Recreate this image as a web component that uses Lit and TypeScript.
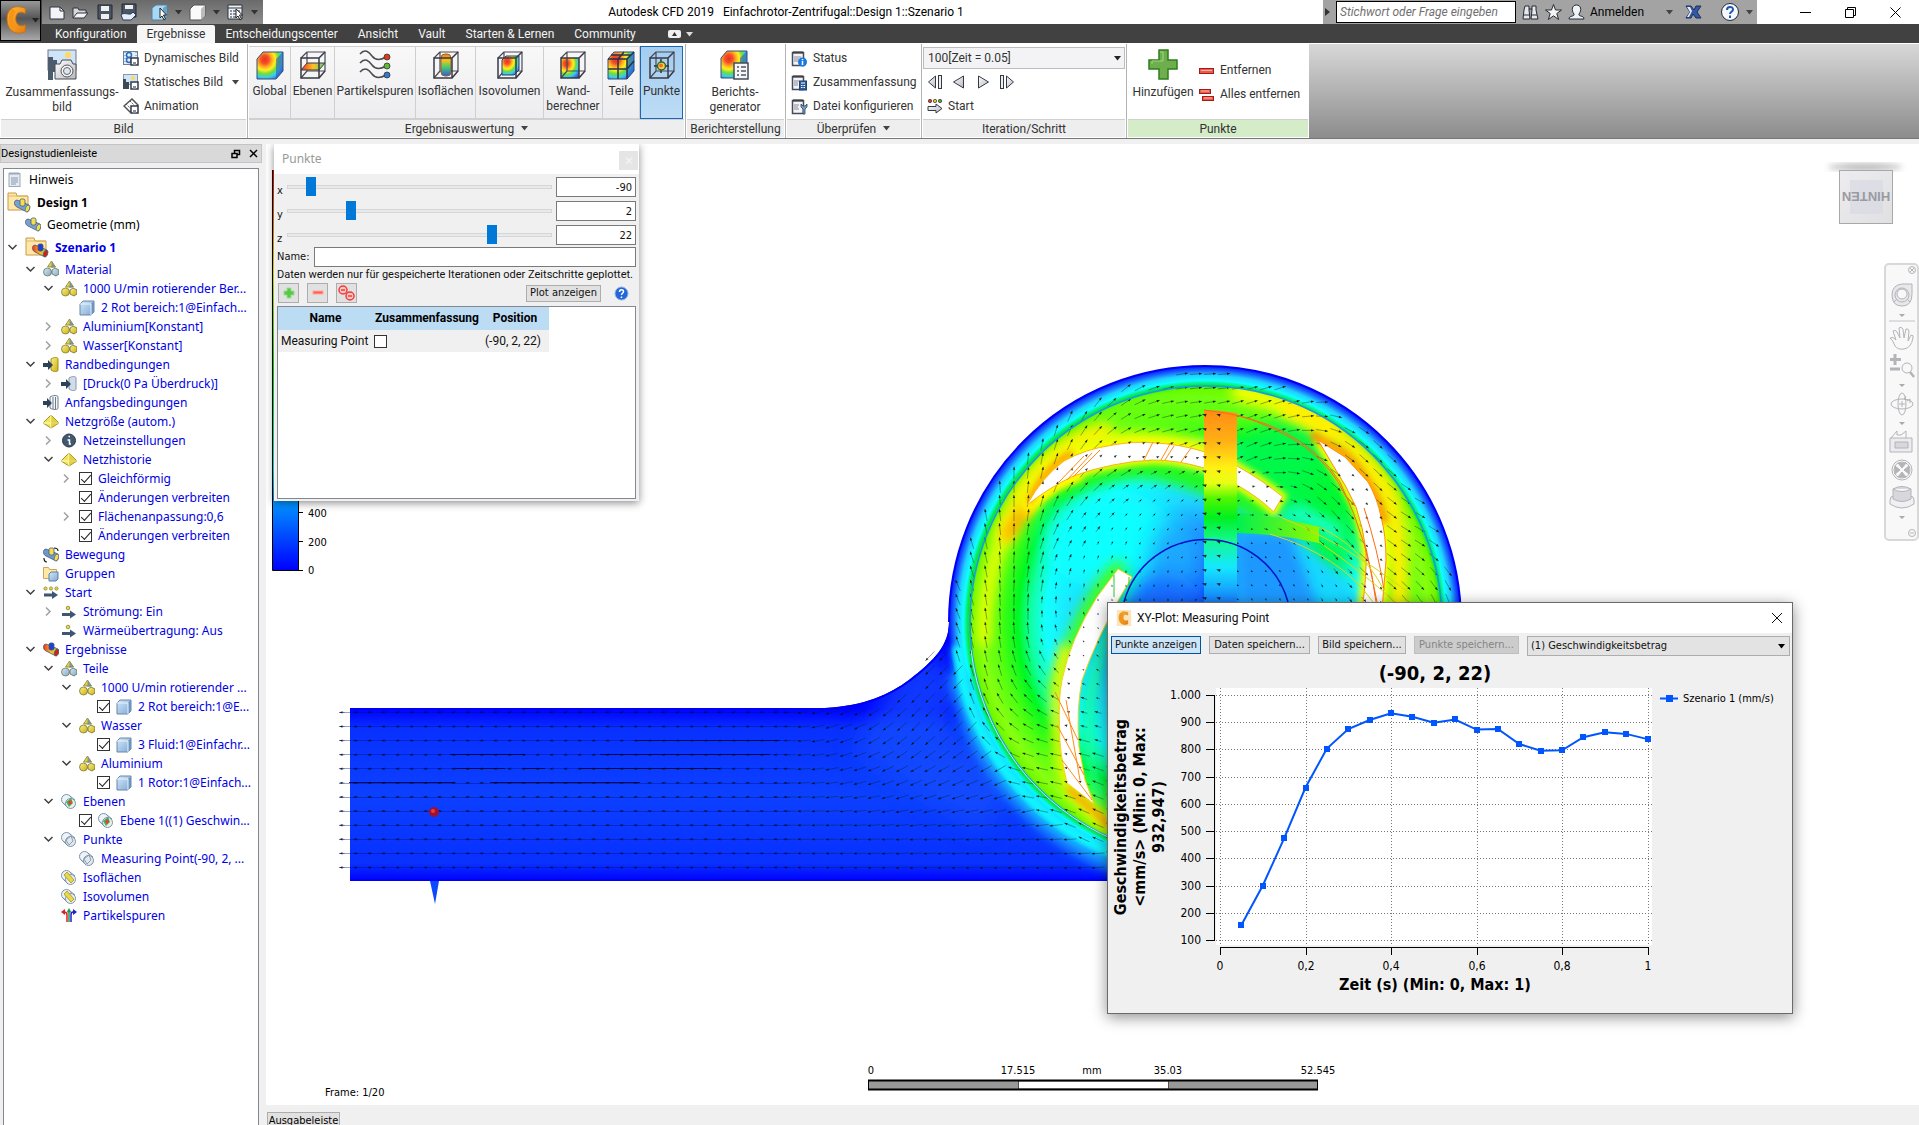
import { LitElement, html, svg, css, nothing } from "lit";
import { customElement } from "lit/decorators.js";

const base = css`
  * { box-sizing: border-box; }
  button, input, select { font: inherit; color: inherit; margin: 0; padding: 0; border-radius: 0; }
  button { cursor: default; }
  svg { display: block; flex: none; }
  .defs { position: absolute; width: 0; height: 0; }
`;

/* ---------- shared gradients ---------- */
const defs = html`<svg class="defs" aria-hidden="true"><defs>
  <radialGradient id="heat" cx="0.3" cy="0.28" r="0.95">
    <stop offset="0" stop-color="#f0301c"/><stop offset="0.16" stop-color="#f2502a"/>
    <stop offset="0.3" stop-color="#ffb020"/><stop offset="0.42" stop-color="#ffee20"/>
    <stop offset="0.56" stop-color="#70dc3c"/><stop offset="0.7" stop-color="#38d0e8"/>
    <stop offset="0.86" stop-color="#2f78e8"/><stop offset="1" stop-color="#2848c8"/>
  </radialGradient>
  <linearGradient id="heatV" x1="0" y1="0" x2="0" y2="1">
    <stop offset="0" stop-color="#f08020"/><stop offset="0.3" stop-color="#f4c020"/>
    <stop offset="0.55" stop-color="#58d060"/><stop offset="1" stop-color="#2860e0"/>
  </linearGradient>
  <linearGradient id="heatH" x1="0" y1="0" x2="1" y2="0">
    <stop offset="0" stop-color="#f03020"/><stop offset="0.5" stop-color="#ffc020"/>
    <stop offset="1" stop-color="#50d080"/>
  </linearGradient>
  <linearGradient id="gold" x1="0" y1="0" x2="1" y2="1">
    <stop offset="0" stop-color="#fff08a"/><stop offset="1" stop-color="#c8b010"/>
  </linearGradient>
  <linearGradient id="sky" x1="0" y1="0" x2="1" y2="1">
    <stop offset="0" stop-color="#d4e8fa"/><stop offset="1" stop-color="#7ea8d4"/>
  </linearGradient>
  <linearGradient id="orange" x1="0" y1="0" x2="1" y2="1">
    <stop offset="0" stop-color="#ffb838"/><stop offset="1" stop-color="#e87c10"/>
  </linearGradient>
  <linearGradient id="metal" x1="0" y1="0" x2="1" y2="1">
    <stop offset="0" stop-color="#ffffff"/><stop offset="1" stop-color="#b8b8c0"/>
  </linearGradient>
</defs></svg>`;

const icon = (w: number, h: number, body: unknown) =>
  html`<svg width=${w} height=${h} viewBox="0 0 ${w} ${h}" aria-hidden="true">${body}</svg>`;

const chevronC = svg`<path d="M26 5C14 0 5 5 5 17s8 20 21 15v-8c-7 3-11-1-11-7s4-10 11-6z" fill="url(#orange)" stroke="#c8700c"/>
  <path d="M15 9c-4 4-4 13 1 18l-2 5C5 27 5 12 11 5z" fill="#f59418"/>`;

const tri = (c = "#444") => html`<svg width="7" height="5" viewBox="0 0 7 5" aria-hidden="true"><path d="M0 0h7L3.500 4.500z" fill=${c}/></svg>`;

/* ---------- ribbon icons ---------- */
const wireBack = svg`<path d="M9 2h18v19H9zM9 21l-6 7M9 2L3 8" fill="none" stroke="#4a4a55" stroke-width="1.200"/>`;
const wireFront = svg`<path d="M3 8h18v20H3zM21 8l6-6M21 28l6-7" fill="none" stroke="#3a3a46" stroke-width="1.500"/>`;
const solidCube = svg`<path d="M2 9l6-7h20v19l-7 8H2z" fill="url(#heat)"/><path d="M21 9l7-7v19l-7 8z" fill="#2850c8" opacity=".55"/>
  <path d="M2 9l6-7h20v19l-7 8H2z" fill="none" stroke="#3a4a78"/>`;
const floppy = svg`<path d="M1 1h7v7H1z" fill="#fff" stroke="#333a48" stroke-width="1.500"/><path d="M3 5h3v3H3z" fill="#8890a0"/>`;

const R: Record<string, unknown> = {
  photo: icon(30, 32, svg`<rect x="1" y="1" width="28" height="20" fill="#cfe4f6" stroke="#6a7a88"/><circle cx="21" cy="6" r="3" fill="#ffd860"/>
    <path d="M1 8h5v23H1zM6 11h4v12H6z" fill="#4c5c6c"/><path d="M8 15h5l2-4h9l2 4h3v15H8z" fill="url(#metal)" stroke="#444c54"/><circle cx="20" cy="22" r="6" fill="#f4f4f4" stroke="#555"/><circle cx="20" cy="22" r="3.500" fill="#dfe7ee" stroke="#667"/>`),
  dyn: icon(16, 16, svg`<rect x=".5" y="1.500" width="14" height="13" fill="#e2eefa" stroke="#68829c"/><path d="M2 2v12M13 2v12" stroke="#68829c" stroke-dasharray="1 2"/><circle cx="6" cy="5" r="2.500" fill="none" stroke="#2a6cc0" stroke-width="1.500"/><circle cx="6" cy="10" r="2.500" fill="none" stroke="#2a6cc0" stroke-width="1.500"/><g transform="translate(7 7)">${floppy}</g>`),
  stat: icon(16, 16, svg`<rect x=".5" y=".5" width="14" height="10" fill="#cfe4f6" stroke="#8a98a4"/><circle cx="10" cy="4" r="2" fill="#ffd860"/><path d="M0 5h3v10H0zM3 8h3v7H3z" fill="#3c4854"/><g transform="translate(7 7)">${floppy}</g>`),
  anim: icon(16, 16, svg`<path d="M1 8l8-7 6 6-8 7z" fill="#fff" stroke="#555" stroke-width="1.500"/><path d="M1 8l6 6M3 6l7 7M7 3l4 4" stroke="#555" stroke-dasharray="1.500 1"/><g transform="translate(7 7)">${floppy}</g>`),
  global: icon(30, 30, solidCube),
  planes: icon(30, 30, svg`${wireBack}<path d="M3 20l6-7h18l-6 7z" fill="url(#heatH)" stroke="#3a3a46"/>${wireFront}`),
  traces: icon(32, 30, svg`${[5, 14, 23].map((y, i) => svg`<path d="M1 ${y - 1}c5-6 9-2 12 2s7 5 14 1" fill="none" stroke="#4a4a55" stroke-width="1.500"/><circle cx="28" cy="${y + 2}" r="3" fill="${["#e03818", "#60b838", "#3078d0"][i]}" stroke="#333" stroke-width=".8"/>`)}`),
  isof: icon(30, 30, svg`${wireBack}<rect x="10" y="4" width="10" height="22" rx="4" fill="url(#heatV)" stroke="#a06020"/>${wireFront}`),
  isov: icon(30, 30, svg`${wireBack}<path d="M7 10l4-4h13v14l-5 5H7z" fill="url(#heat)" stroke="#333a78"/>${wireFront}`),
  wall: icon(30, 30, svg`<path d="M3 8h18v20H3z" fill="url(#heat)"/>${wireBack}${wireFront}`),
  parts: icon(30, 30, svg`${solidCube}<path d="M2 19h19M12 9v20M21 9v20M2 9h19l7-7M12 9l6-7M21 19l7-8M5 5h20" fill="none" stroke="#28324a" stroke-width="1.500"/>`),
  points: icon(30, 30, svg`${wireBack}${wireFront}<path d="M14 9v14M7 16h15" stroke="#333" stroke-width="1.500"/><circle cx="14.500" cy="16" r="4" fill="#ffd040" stroke="#2a6a30" stroke-width="1.500"/><circle cx="14" cy="15.500" r="2" fill="#f07020"/>`),
  report: icon(32, 32, svg`<g>${solidCube}</g><rect x="15" y="14" width="14" height="16" fill="#f4f6f8" stroke="#444c58" stroke-width="1.500"/><path d="M18 18h2M22 18h5M18 22h2M22 22h5M18 26h2M22 26h5" stroke="#556" stroke-width="1.500"/>`),
  status: icon(17, 17, svg`<path d="M1.500 2.500h11v13h-11z" fill="#f2f4f6" stroke="#444c58" stroke-width="1.500"/><path d="M3 1v3M5 1v3M7 1v3M9 1v3M11 1v3" stroke="#333"/><path d="M3 7h7M3 9h5M3 11h4" stroke="#889"/><circle cx="11.500" cy="12" r="4.500" fill="#1878e0"/><path d="M11.500 11v4M11.500 9v1.200" stroke="#fff" stroke-width="1.500"/>`),
  summary: icon(17, 17, svg`<path d="M1.500 2.500h11v13h-11z" fill="#f2f4f6" stroke="#444c58" stroke-width="1.500"/><path d="M3 1v3M5 1v3M7 1v3M9 1v3M11 1v3" stroke="#333"/><path d="M3 7h5M3 9h4M3 11h4" stroke="#889"/><rect x="8.500" y="7" width="7" height="9" fill="#2a5ca0" stroke="#20406c"/><path d="M10 9h4" stroke="#fff"/><path d="M10 11.500h4M10 13.500h4" stroke="#fff" stroke-dasharray="1 .5"/>`),
  config: icon(17, 17, svg`<path d="M1.500 2.500h11v13h-11z" fill="#f2f4f6" stroke="#444c58" stroke-width="1.500"/><path d="M3 1v3M5 1v3M7 1v3M9 1v3M11 1v3" stroke="#333"/><path d="M3 7h5M3 9h4M3 11h5" stroke="#889"/><path d="M10 6v3l2 2v5h2v-5l2-2V6l-2 2h-2z" fill="#7a9cc0" stroke="#2c4460" stroke-width=".8"/>`),
  plus: icon(30, 32, svg`<path d="M11 1h9v10h9v9h-9v10h-9V20H1v-9h10z" fill="#6fae4c" stroke="#2f7d1c" stroke-width="1.500"/><path d="M12 3h3v9H4v3" fill="none" stroke="#a4d488"/>`),
  minus: icon(17, 16, svg`<rect x="1.500" y="5.500" width="14" height="5" fill="#f2574c" stroke="#9c2018"/><path d="M3 7.500h11" stroke="#ffb0a8"/>`),
  minus2: icon(17, 16, svg`<rect x="1.500" y="2.500" width="11" height="4" fill="#f2574c" stroke="#9c2018"/><rect x="4.500" y="9.500" width="11" height="4" fill="#f2574c" stroke="#9c2018"/><path d="M3 4h8M6 11h8" stroke="#ffb0a8"/>`),
  first: icon(16, 16, svg`<path d="M8.500 2v12L1.500 8z" fill="url(#metal)" stroke="#333a44"/><rect x="11.500" y="1.500" width="3" height="13" fill="#eee" stroke="#333a44"/>`),
  prev: icon(16, 16, svg`<path d="M12.500 2v12L2.500 8z" fill="url(#metal)" stroke="#333a44"/>`),
  next: icon(16, 16, svg`<path d="M3.500 2v12l10-6z" fill="url(#metal)" stroke="#333a44"/>`),
  last: icon(16, 16, svg`<path d="M7.500 2v12l7-6z" fill="url(#metal)" stroke="#333a44"/><rect x="1.500" y="1.500" width="3" height="13" fill="#eee" stroke="#333a44"/>`),
  run: icon(16, 16, svg`<circle cx="3" cy="3" r="1.700" fill="#d83820" stroke="#333" stroke-width=".7"/><circle cx="8" cy="3" r="1.700" fill="#e8c020" stroke="#333" stroke-width=".7"/><circle cx="13" cy="3" r="1.700" fill="#48a830" stroke="#333" stroke-width=".7"/><path d="M1 8.500h8v-2.500l6 4.500-6 4.500v-2.500H1z" fill="url(#metal)" stroke="#333a44"/>`),
};

const big = (ic: string, lines: string[], cls = "") => html`<button class="big ${cls}">${R[ic]}<span>${lines.map((l, i) => html`${i ? html`<br>` : nothing}${l}`)}</span></button>`;
const small = (ic: string, label: string, drop = false) => html`<button class="small">${R[ic]}<span>${label}</span>${drop ? tri() : nothing}</button>`;

@customElement("cfd-ribbon")
class CfdRibbon extends LitElement {
  static styles = [base, css`
    :host { display: block; font: 12px/15px Roboto, "Noto Sans", sans-serif; color: #333; }
    .top { display: grid; grid-template-columns: 42px 1fr; background: #414141; }
    .app { grid-row: 1 / 3; width: 41px; height: 41px; border: 1px solid #000; background: linear-gradient(#989898, #555 45%, #a8a8a8); display: flex; align-items: center; gap: 1px; padding-left: 3px; align-self: start; }
    .titlebar { display: flex; height: 24px; background: #fff; align-items: stretch; color: #000; }
    .quick { width: 221px; background: linear-gradient(#6a6a6a, #8e8e8e); display: flex; align-items: center; padding: 0 6px; gap: 7px; }
    .quick button, .search button, .win button { border: 0; background: none; display: flex; align-items: center; }
    .sep { width: 1px; height: 22px; background: #a8a8a8; }
    .doc { flex: 1; text-align: center; line-height: 24px; white-space: pre; padding-right: 14px; }
    .search { width: 434px; background: #a3a3a3; display: flex; align-items: center; gap: 6px; padding: 0 4px 0 2px; }
    .search input { width: 180px; height: 22px; border: 1px solid #000; background: #fff; padding: 0 3px; font-style: italic; font-size: 12px; }
    .search input::placeholder { color: #707070; opacity: 1; }
    .search .user { gap: 5px; flex: 1; }
    .search .user svg:last-child { margin-left: auto; margin-right: 6px; }
    .search .x { margin-right: 12px; }
    .win { width: 162px; display: flex; justify-content: flex-end; gap: 34px; padding-right: 18px; }
    .tabs { display: flex; height: 19px; padding-left: 3px; align-items: flex-end; }
    .tab { border: 0; background: none; color: #f4f4f4; height: 18px; line-height: 18px; padding: 0 10px; }
    .tab.on { background: #f6f6f6; color: #333; border-radius: 2px 2px 0 0; }
    .expand { border: 0; background: none; display: flex; align-items: center; gap: 5px; height: 18px; margin-left: 22px; }
    .ribbon { display: flex; height: 96px; background: linear-gradient(#d8d8d8, #8c8c8c); border-top: 1px solid #fff; border-bottom: 1px solid #777; }
    .panel { background: #fff; border-right: 1px solid #b4b4b4; display: flex; flex-direction: column; padding: 0 1px; }
    .body { flex: 1; display: flex; padding-top: 2px; }
    .foot { height: 18px; background: #eee; border-top: 1px solid #d0d0d0; line-height: 16px; display: flex; justify-content: center; align-items: center; gap: 7px; margin-bottom: 1px; }
    .foot.green { background: #d4ecc8; }
    .p1 { width: 248px; } .p2 { width: 438px; } .p3 { width: 100px; } .p4 { width: 136px; } .p5 { width: 205px; } .p6 { width: 182px; border: 0; }
    .big { display: flex; flex-direction: column; align-items: center; gap: 4px; border: 0; background: none; padding-top: 3px; height: 73px; white-space: nowrap; text-align: center; flex: none; line-height: 15px; }
    .strip .big { background: linear-gradient(#f8f8f8, #ededf0); border: 1px solid #cfcfcf; border-left-width: 0; }
    .strip .big.sel { background: linear-gradient(#a4cdf0, #bddcf5); border: 1px solid #1a66b8; }
    .w1 { width: 122px; } .g1 { width: 42px; } .g2 { width: 44px; } .g3 { width: 81px; } .g4 { width: 60px; } .g5 { width: 68px; } .g6 { width: 59px; } .g7 { width: 37px; } .g8 { width: 43px; } .w2 { width: 96px; } .w3 { width: 70px; }
    .col { display: flex; flex-direction: column; }
    .small { display: flex; align-items: center; gap: 5px; height: 24px; border: 0; background: none; white-space: nowrap; }
    .small svg + span + svg { margin-left: 4px; }
    .p4 .body { padding-left: 4px; } .p5 .col { flex: 1; }
    .pick { display: flex; align-items: center; height: 24px; }
    .combo { position: relative; display: flex; flex: 1; }
    .combo select { appearance: none; flex: 1; height: 22px; border: 1px solid #bcbcbc; background: #f3f3f5; padding: 0 4px; }
    .combo svg { position: absolute; right: 4px; top: 9px; pointer-events: none; }
    .steps { display: flex; gap: 8px; height: 24px; align-items: center; padding-left: 4px; }
    .steps button { border: 0; background: none; }
    .go { padding-left: 4px; }
    .rem { justify-content: center; padding-bottom: 0; }
  `];
  render() {
    const tabs = ["Konfiguration", "Ergebnisse", "Entscheidungscenter", "Ansicht", "Vault", "Starten & Lernen", "Community"];
    const q = (label: string, body: unknown, cls = "") => html`<button class=${cls} aria-label=${label}>${icon(17, 18, body)}</button>`;
    return html`${defs}
    <header class="top">
      <button class="app" aria-label="Anwendungsmenü"><svg width="27" height="33" viewBox="2 0 30 38" aria-hidden="true">${chevronC}</svg>${tri("#222")}</button>
      <div class="titlebar">
        <div class="quick">
          ${q("Neu", svg`<path d="M2 4h10l4 4v8H2z" fill="#f4f4f4" stroke="#2c3440"/><path d="M12 4v4h4" fill="none" stroke="#2c3440"/>`)}
          ${q("Öffnen", svg`<path d="M1 15V5h5l1 2h7v3" fill="#d8d8d8" stroke="#2c3440"/><path d="M1 15l4-5h11l-4 5z" fill="#f4f4f4" stroke="#2c3440"/>`)}
          ${q("Speichern", svg`<path d="M2 2h14v14H2z" fill="#4a5664" stroke="#20262e"/><path d="M5 3h8v5H5zM5 11h8v5H5z" fill="#f0f0f0"/>`)}
          ${q("Alle speichern", svg`<path d="M2 1h14v13H2z" fill="#4a5664" stroke="#20262e"/><path d="M5 2h8v4H5z" fill="#f0f0f0"/><path d="M1 12c4-4 9 2 12-3l3 3-5 5H3z" fill="#e8eef6" stroke="#203c64"/>`)}
          <i class="sep"></i>
          ${q("Auswahl", svg`<path d="M1 5l4-3h11v12l-4 3H1z" fill="#a8d8f4" stroke="#50809c"/><path d="M12 5l4-3v12l-4 3z" fill="#68a4c8"/><path d="M9 5v10l2-2 2 4 1.500-1-2-4h3z" fill="#fff" stroke="#222"/>`)}
          ${tri("#333")}
          ${q("Darstellung", svg`<path d="M1 6l4-4h11v11l-4 4H1z" fill="#fafafa" stroke="#555"/><path d="M12 6l4-4v11l-4 4z" fill="#bbb"/>`)}
          ${tri("#333")}
          ${q("Liste", svg`<path d="M1 2h14v14H1z" fill="#eef2f6" stroke="#2c3440"/><path d="M1 5h14M3 8h2M6 8h7M3 11h2M6 11h7M3 14h2M6 14h4" stroke="#2c3440"/><path d="M9 6v9l2-2 2 4 1.500-1-2-4h3z" fill="#fff" stroke="#222"/>`)}
          ${tri("#333")}
        </div>
        <div class="doc">Autodesk CFD 2019   Einfachrotor-Zentrifugal::Design 1::Szenario 1</div>
        <div class="search">
          <svg width="5" height="8" viewBox="0 0 5 8" aria-hidden="true"><path d="M0 0l5 4-5 4z" fill="#333"/></svg>
          <input aria-label="Suche" placeholder="Stichwort oder Frage eingeben">
          ${q("Suchen", svg`<path d="M3 3h4v4l1 9H1l1-9zM10 3h4v4l2 9H9l1-9z" fill="#e8e8e8" stroke="#222b38"/><path d="M7 6h3M2 12h5M10 12h5" stroke="#222b38"/>`)}
          ${q("Favoriten", svg`<path d="M8.500 1.500l2 5.500h6l-4.700 3.500 1.800 6-5.100-3.700-5.100 3.700 1.800-6L.5 7h6z" fill="#f4f4f4" stroke="#222b38"/>`)}
          <button class="user">${icon(17, 18, svg`<path d="M1 16c0-4 6-2 5-5-3-4-2-9 2.500-9s5.500 5 2.500 9c-1 3 5 1 5 5z" fill="#f0f2f6" stroke="#222b38"/>`)}Anmelden${tri()}</button>
          ${q("Exchange", svg`<path d="M1 3h5l3 4 2-4h5l-4 6 4 6h-5l-3-4-2 4H1l4-6z" fill="#3458a8" stroke="#1c3058"/><path d="M2 4h3l2 4-1 2-2 4H2l3-5z" fill="#e4eaf6"/>`, "x")}
          <button aria-label="Hilfe"><svg width="20" height="20" viewBox="0 0 20 20" aria-hidden="true"><circle cx="10" cy="10" r="8.500" fill="#f6f8fc" stroke="#222b38"/><path d="M7 8c0-4 6-4 6-.5 0 2.500-3 2-3 4.500M10 13.500V16" fill="none" stroke="#1c54b8" stroke-width="2"/></svg></button>
          ${tri()}
        </div>
        <div class="win">
          <button aria-label="Minimieren">${icon(11, 11, svg`<path d="M0 5.500h11" stroke="#000"/>`)}</button>
          <button aria-label="Wiederherstellen">${icon(11, 11, svg`<path d="M.5 2.500h8v8h-8zM2.500 2V.5h8v8H9" fill="none" stroke="#000"/>`)}</button>
          <button aria-label="Schließen">${icon(11, 11, svg`<path d="M.5.5l10 10M10.500.5l-10 10" stroke="#000"/>`)}</button>
        </div>
      </div>
      <nav class="tabs">
        ${tabs.map((t, i) => html`<button class="tab ${i === 1 ? "on" : ""}">${t}</button>`)}
        <button class="expand" aria-label="Multifunktionsleiste minimieren">${icon(13, 9, svg`<rect width="13" height="8" rx="2" fill="#f0f0f0"/><path d="M4 6l2.500-4L9 6z" fill="#333"/>`)}${tri("#ddd")}</button>
      </nav>
    </header>
    <div class="ribbon">
      <section class="panel p1"><div class="body">${big("photo", ["Zusammenfassungs-", "bild"], "w1")}
        <div class="col">${small("dyn", "Dynamisches Bild")}${small("stat", "Statisches Bild", true)}${small("anim", "Animation")}</div></div><div class="foot">Bild</div></section>
      <section class="panel p2"><div class="body strip">
        ${big("global", ["Global"], "g1")}${big("planes", ["Ebenen"], "g2")}${big("traces", ["Partikelspuren"], "g3")}${big("isof", ["Isoflächen"], "g4")}
        ${big("isov", ["Isovolumen"], "g5")}${big("wall", ["Wand-", "berechner"], "g6")}${big("parts", ["Teile"], "g7")}${big("points", ["Punkte"], "g8 sel")}
      </div><div class="foot">Ergebnisauswertung ${tri()}</div></section>
      <section class="panel p3"><div class="body">${big("report", ["Berichts-", "generator"], "w2")}</div><div class="foot">Berichterstellung</div></section>
      <section class="panel p4"><div class="body"><div class="col">${small("status", "Status")}${small("summary", "Zusammenfassung")}${small("config", "Datei konfigurieren")}</div></div><div class="foot">Überprüfen ${tri()}</div></section>
      <section class="panel p5"><div class="body"><div class="col">
        <div class="pick"><div class="combo"><select aria-label="Zeitschritt"><option>100[Zeit = 0.05]</option></select>${tri("#222")}</div></div>
        <div class="steps"><button aria-label="Erster">${R.first}</button><button aria-label="Zurück">${R.prev}</button><button aria-label="Weiter">${R.next}</button><button aria-label="Letzter">${R.last}</button></div>
        <div class="go">${small("run", "Start")}</div></div></div><div class="foot">Iteration/Schritt</div></section>
      <section class="panel p6"><div class="body">${big("plus", ["Hinzufügen"], "w3")}
        <div class="col rem">${small("minus", "Entfernen")}${small("minus2", "Alles entfernen")}</div></div><div class="foot green">Punkte</div></section>
    </div>`;
  }
}

/* ---------- design study tree ---------- */
const trio = (tone: string) => svg`<path d="M8.500 0l4 6h-8z" fill="url(#gold)" stroke="#8a8420" stroke-width=".8"/><path d="M8.500 0v7l4-1z" fill="#6c8ca8" opacity=".8"/><circle cx="4.500" cy="11" r="4" fill="url(#${tone})" stroke="#7a7a40" stroke-width=".8"/><path d="M9 9l3-2 4 2v4l-3 2-4-2z" fill="url(#${tone})" stroke="#6c6c38" stroke-width=".8"/>`;
const pipe = (a: string, b: string, c: string) => svg`<path d="M.5 4.500c0-2 2-3 4-2L15 7c2 2 0 7-2 7L3 9C1 8 .5 6.500.5 4.500z" fill="${a}" stroke="#4a5a78" stroke-width=".8"/><path d="M6 2c0-1.500 5-1.500 5 0v5c-1 1.500-4 1.500-5 0z" fill="${b}" stroke="#4a5a78" stroke-width=".8"/><ellipse cx="13.500" cy="10.500" rx="2" ry="3.500" transform="rotate(20 13.500 10.500)" fill="${c}" stroke="#4a5a78" stroke-width=".6"/>`;
const folder = svg`<path d="M1 2h8l1 3h11v14H1z" fill="#ffe7a8" stroke="#c89a48"/><path d="M1 5h20" stroke="#e0b868"/>`;
const rings = (mid: unknown) => svg`<circle cx="5.500" cy="5.500" r="5" fill="#eef3f8" stroke="#7a94ac"/>${mid}<path d="M2 9l5 5M9 2l5 4" stroke="#7a94ac"/>`;
const T: Record<string, unknown> = {
  note: icon(16, 16, svg`<rect x="2" y="1.500" width="11" height="13" fill="#e4ebf2" stroke="#9aa8b8"/><path d="M3 0v3M5 0v3M7 0v3M9 0v3M11 0v3" stroke="#9aa8b8"/><path d="M4 6h7M4 8h7M4 10h7M4 12h5" stroke="#8898ac"/>`),
  folderG: icon(24, 22, svg`${folder}<g transform="translate(7 7)">${pipe("#78a0d0", "#f0e050", "#f0e050")}</g>`),
  folderS: icon(24, 22, svg`${folder}<g transform="translate(7 7)">${pipe("url(#heatH)", "#2040d0", "#d82010")}</g>`),
  geo: icon(16, 16, pipe("#78a0d0", "#f0e050", "#f0e050")),
  mat: icon(16, 16, trio("sky")), matY: icon(16, 16, trio("gold")),
  cube: icon(16, 16, svg`<path d="M1 4l3-3h11v11l-3 3H1z" fill="url(#sky)" stroke="#6888a8"/><path d="M12 4l3-3v11l-3 3z" fill="#6c94c0"/><path d="M1 4h11v11" fill="none" stroke="#e8f2fc"/>`),
  bc: icon(16, 16, svg`<path d="M8 2c3-2 7-2 7 0v11c0 2-4 2-7 0z" fill="url(#gold)" stroke="#a08c10"/><path d="M0 6h5V3l5 5-5 5v-3H0z" fill="#2c4258"/>`),
  pr: icon(16, 16, svg`<path d="M8 2c3-2 7-2 7 0v11c0 2-4 2-7 0z" fill="#d0dcea" stroke="#8498b0"/><path d="M0 6h5V3l5 5-5 5v-3H0z" fill="#2c4258"/>`),
  init: icon(16, 16, svg`<path d="M7 2c3-2 8-2 8 0v11c0 2-5 2-8 0zM10 2v12M12.500 2v12" fill="#f4f6f8" stroke="#6c7c8c"/><path d="M0 6h4V3l5 5-5 5v-3H0z" fill="#2c4258"/>`),
  mesh: icon(16, 16, svg`<path d="M8 1l8 8-8 5-8-5z" fill="#f4e458" stroke="#9c9428"/><path d="M8 1v13M0 9h16" stroke="#fffbd0"/><path d="M8 1l8 8-8 5z" fill="#d0bc20" opacity=".5"/>`),
  info: icon(16, 16, svg`<circle cx="8" cy="7.500" r="6.500" fill="#42586e" stroke="#283848"/><path d="M6.500 7h2v4h1.500M7.500 3.500h1.500" fill="none" stroke="#fff" stroke-width="1.500"/>`),
  motion: icon(16, 16, svg`${pipe("#6c98d0", "#f0e050", "#f0e050")}<path d="M11 1c3 0 4 1 4 3M1 11c0 3 1 4 3 4" fill="none" stroke="#111" stroke-width="1.200"/>`),
  group: icon(16, 16, svg`<path d="M.5 1.500h5l1 2h7v9H.5z" fill="#ffe7a8" stroke="#d0a458"/><path d="M6 8l2-2h7v7l-2 2H6z" fill="url(#sky)" stroke="#5880a8"/>`),
  start: icon(16, 16, svg`<g fill="#e8d840" stroke="#807820" stroke-width=".7"><circle cx="2.500" cy="3.500" r="1.600"/><circle cx="8" cy="3.500" r="1.600"/><circle cx="13.500" cy="3.500" r="1.600"/></g><path d="M1 8.500h8V6l6 4-6 4v-2.500H1z" fill="#3c5674"/>`),
  flow: icon(16, 16, svg`<circle cx="7" cy="4" r="1.800" fill="#e8d840" stroke="#807820" stroke-width=".7"/><path d="M1 9h8V6.500l6 4-6 4V12H1z" fill="#3c5674"/>`),
  res: icon(16, 16, pipe("url(#heatH)", "#2040d0", "#d82010")),
  plane: icon(16, 16, rings(svg`<circle cx="9.500" cy="9.500" r="5" fill="#e8f0e8" stroke="#7a94ac"/><path d="M5 8l5-4 2 5-4 4z" fill="#40b060"/><path d="M7 8l3-2 1 3-2 2z" fill="#f04020"/>`)),
  point: icon(16, 16, rings(svg`<circle cx="9.500" cy="9.500" r="5" fill="#e2e8ee" stroke="#7a94ac"/><path d="M5 8l5-4 2 5-4 4z" fill="none" stroke="#8ca0b4"/>`)),
  iso: icon(16, 16, rings(svg`<circle cx="9.500" cy="9.500" r="5" fill="#eef2f4" stroke="#7a94ac"/><path d="M3 5l3-3 7 8-3 3z" fill="#e6d850" stroke="#b4a428"/>`)),
  trace: icon(16, 16, svg`<path d="M6 14V7c0-2-1-3-3-3" fill="none" stroke="#e02020" stroke-width="1.500"/><path d="M4 1v6L0 4z" fill="#e02020"/><path d="M8 14V4" stroke="#209850" stroke-width="1.500"/><path d="M5.500 4.500h5L8 0z" fill="#209850"/><path d="M10 14V7c0-2 1-3 2-3" fill="none" stroke="#2020d0" stroke-width="1.500"/><path d="M12 1v6l4-3z" fill="#2020d0"/>`),
};
type Row = [depth: number, arrow: string, check: boolean, icon: string, label: string, cls?: string];
const rows: Row[] = [
  [0, "", false, "note", "Hinweis", "r21 black"], [0, "", false, "folderG", "Design 1", "r24 black bold"],
  [1, "", false, "geo", "Geometrie (mm)", "r21 black"], [1, "v", false, "folderS", "Szenario 1", "r24 bold"],
  [2, "v", false, "mat", "Material", "r20"], [3, "v", false, "matY", "1000 U/min rotierender Ber..."], [4, "", false, "cube", "2 Rot bereich:1@Einfach..."],
  [3, ">", false, "matY", "Aluminium[Konstant]"], [3, ">", false, "matY", "Wasser[Konstant]"],
  [2, "v", false, "bc", "Randbedingungen"], [3, ">", false, "pr", "[Druck(0 Pa Überdruck)]"], [2, "", false, "init", "Anfangsbedingungen"],
  [2, "v", false, "mesh", "Netzgröße (autom.)"], [3, ">", false, "info", "Netzeinstellungen"], [3, "v", false, "mesh", "Netzhistorie"],
  [4, ">", true, "", "Gleichförmig"], [4, "", true, "", "Änderungen verbreiten"], [4, ">", true, "", "Flächenanpassung:0,6"], [4, "", true, "", "Änderungen verbreiten"],
  [2, "", false, "motion", "Bewegung"], [2, "", false, "group", "Gruppen"], [2, "v", false, "start", "Start"],
  [3, ">", false, "flow", "Strömung: Ein"], [3, "", false, "flow", "Wärmeübertragung: Aus"], [2, "v", false, "res", "Ergebnisse"],
  [3, "v", false, "mat", "Teile"], [4, "v", false, "matY", "1000 U/min rotierender ..."], [5, "", true, "cube", "2 Rot bereich:1@E..."],
  [4, "v", false, "matY", "Wasser"], [5, "", true, "cube", "3 Fluid:1@Einfachr..."], [4, "v", false, "matY", "Aluminium"], [5, "", true, "cube", "1 Rotor:1@Einfach..."],
  [3, "v", false, "plane", "Ebenen"], [4, "", true, "plane", "Ebene 1((1) Geschwin..."], [3, "v", false, "point", "Punkte"], [4, "", false, "point", "Measuring Point(-90, 2, ..."],
  [3, "", false, "iso", "Isoflächen"], [3, "", false, "iso", "Isovolumen"], [3, "", false, "trace", "Partikelspuren"],
];

@customElement("design-tree")
class DesignTree extends LitElement {
  static styles = [base, css`
    :host { display: flex; flex-direction: column; width: 266px; flex: none; font: 12px/15px "Noto Sans", "Open Sans", sans-serif; padding-top: 5px; color: #000; }
    .bar { height: 19px; margin-right: 4px; background: #d9d9d9; border: 1px solid #c4c4c4; display: flex; align-items: center; gap: 8px; padding-right: 2px; font: 11px/15px Roboto, sans-serif; }
    .bar span { flex: 1; }
    .bar button { border: 0; background: none; }
    .tree { flex: 1; margin: 5px 7px 0 3px; border: 1px solid #828790; border-bottom: 0; background: #fff; overflow: hidden; list-style: none; padding: 0; }
    .row { display: flex; align-items: center; height: 19px; color: #0000e8; white-space: nowrap; }
    .r20 { height: 20px; } .r21 { height: 21px; } .r24 { height: 24px; }
    .black { color: #000; } .bold { font-weight: 700; }
    .pad { flex: none; display: flex; justify-content: flex-end; height: 11px; }
    .d0 { width: 3px; } .d1 { width: 21px; } .d2 { width: 39px; } .d3 { width: 57px; } .d4 { width: 75px; } .d5 { width: 93px; }
    .tog { border: 0; background: none; width: 11px; height: 11px; margin-right: 7px; }
    label { display: flex; align-items: center; }
    .txt { margin-left: 6px; }
    input { appearance: none; width: 13px; height: 13px; border: 1px solid #333; background: #fff; display: grid; place-items: center; margin-right: 6px; }
    input:checked::before { content: ""; width: 9px; height: 4px; border: solid #222; border-width: 0 0 1px 1px; transform: rotate(-48deg); margin-bottom: 3px; }
    input + .txt { margin-left: 0; }
  `];
  render() {
    return html`${defs}
      <div class="bar"><span>Designstudienleiste</span>
        <button aria-label="Abdocken">${icon(10, 10, svg`<path d="M1 4.500h5v4H1zM3.500 4V1.500h5v4H6.500" fill="none" stroke="#000" stroke-width="1.500"/>`)}</button>
        <button aria-label="Schließen">${icon(10, 10, svg`<path d="M1 1l7 7M8 1L1 8" stroke="#000" stroke-width="1.500"/>`)}</button></div>
      <ul class="tree">${rows.map(([d, a, chk, ic, label, cls]) => {
        const name = html`<span class="txt">${label}</span>`;
        return html`<li class="row ${cls ?? ""}"><span class="pad d${d}">${a ? html`<button class="tog" aria-label=${"Umschalten " + label}>${icon(11, 11, a === "v"
          ? svg`<path d="M1.500 3l4 4 4-4" fill="none" stroke="#404040" stroke-width="1.500"/>` : svg`<path d="M3 1.500l4 4-4 4" fill="none" stroke="#a0a0a0" stroke-width="1.500"/>`)}</button>` : nothing}</span>
          ${chk ? html`<label><input type="checkbox" checked>${ic ? T[ic] : nothing}${name}</label>` : html`${T[ic]}${name}`}</li>`;
      })}</ul>`;
  }
}

/* ---------- flow field ---------- */
const CX = 1205, CY = 622;
const blades = [
  "M1027 505Q1042 477 1064 461Q1085 449 1113 445Q1135 441 1152 442.700Q1180 444 1204 451.700Q1222 457 1237 466Q1262 480 1282.500 496.700L1273.600 511.700Q1257 496 1237 485Q1222 475 1204 468Q1178 460 1152 460Q1132 461 1113 465Q1092 469 1073.600 476Q1050 487 1027 505Z",
  "M1318 440L1345 457L1368 482Q1378 500 1381 517Q1386 535 1386 560L1382 610H1362Q1367 575 1366 550Q1363 527 1356 507Q1346 485 1334 467Z",
  "M1118 569L1132 577L1120 597Q1096 640 1082 680Q1076 710 1079 747L1085 780L1094 804L1067 783Q1059 750 1059.700 730Q1058 700 1062 680Q1070 640 1097 597Z",
];
const body = "M350 708H825C865 706 890 694 909 680C935 660 949 645 949 622A256 256 0 0 1 1461 622A256 256 0 0 1 1205 881H350Z";
const field = () => {
  let lines = "", heads = "";
  const arrow = (x: number, y: number, ux: number, uy: number, len: number, h: number) => {
    const f = (n: number) => n.toFixed(1);
    const tx = x + ux * len / 2, ty = y + uy * len / 2;
    lines += `M${f(x - ux * len / 2)} ${f(y - uy * len / 2)}L${f(tx)} ${f(ty)}`;
    heads += `M${f(tx)} ${f(ty)}L${f(tx - ux * h - uy * h * 0.4)} ${f(ty - uy * h + ux * h * 0.4)}L${f(tx - ux * h + uy * h * 0.4)} ${f(ty - uy * h - ux * h * 0.4)}Z`;
  };
  for (let j = 0; j < 36; j++) {
    for (let i = 0; i < 81; i++) {
      const x = 342 + i * 14, y = 374 + j * 14.1;
      const dx = x - CX, dy = y - CY, r = Math.hypot(dx, dy);
      if (y > 876) continue;
      if (r < 250) {
        if (x > 1204 && x < 1237 && y > 405) { arrow(x, y, -0.96, -0.25, 16, 4); continue; }
        const a = -0.35 + 0.3 * Math.sin(x / 37 + y / 53);
        const ux = -dy / r, uy = dx / r;
        const len = r < 110 ? 2 : r < 140 ? 4 : r < 165 ? 7 : 12;
        arrow(x, y, ux * Math.cos(a) - uy * Math.sin(a), ux * Math.sin(a) + uy * Math.cos(a), len, r < 140 ? 2 : 3);
      } else if (y > 708 && x < 1108 || y > 655 && x > 925 && x < 1000 || y > 690 && x > 900 && x < 1000) {
        const w = Math.max(0, Math.min(1, (x - 790) / 120)) * Math.max(0.08, Math.min(1, (840 - y) / 110));
        const t = w * 0.8;
        arrow(x, y, -Math.cos(t), Math.sin(t), x < 790 ? 5 : 13, 3);
      }
    }
  }
  return { lines, heads };
};
const vectors = field();
const ductRows = Array.from({ length: 12 }, (_, k) => 712 + Math.round(k * 14.1));

@customElement("flow-view")
class FlowView extends LitElement {
  static styles = [base, css`
    :host { display: block; height: 100%; }
    svg { width: 100%; height: 100%; font: 11px "DejaVu Sans Condensed", sans-serif; }
    .mid { text-anchor: middle; }
    .cube { font: 700 13px "Liberation Sans", sans-serif; fill: #9a9aa0; text-anchor: middle; }
  `];
  render() {
    const soft = (d: string, c: string, w: number, f: string) => svg`<path d="${d}" fill="none" stroke="${c}" stroke-width="${w}" filter="url(#${f})" stroke-linecap="round"/>`;
    return html`<svg viewBox="266 144 1653 961" preserveAspectRatio="xMinYMin slice" role="img" aria-label="Geschwindigkeitsfeld">
      <defs>
        <clipPath id="bodyClip"><path d=${body}/></clipPath>
        <clipPath id="discClip"><circle cx="1206" cy="622" r="236"/></clipPath>
        <filter id="b3" x="-30%" y="-30%" width="160%" height="160%"><feGaussianBlur stdDeviation="3"/></filter>
        <filter id="b6" x="-60%" y="-60%" width="220%" height="220%"><feGaussianBlur stdDeviation="6"/></filter>
        <filter id="b12" x="-80%" y="-80%" width="260%" height="260%"><feGaussianBlur stdDeviation="12"/></filter>
        <linearGradient id="duct" x1="0" y1="708" x2="0" y2="881" gradientUnits="userSpaceOnUse"><stop offset="0" stop-color="#0000ff"/><stop offset=".12" stop-color="#0830ff"/><stop offset=".5" stop-color="#0c40ff"/><stop offset=".9" stop-color="#0830ff"/><stop offset="1" stop-color="#0000ff"/></linearGradient>
        <radialGradient id="disc" gradientUnits="userSpaceOnUse" cx=${CX} cy=${CY} r="257">
          <stop offset=".1" stop-color="#1050ff"/><stop offset=".35" stop-color="#1e90ff"/><stop offset=".48" stop-color="#1ed8ff"/><stop offset=".62" stop-color="#14ffff"/>
          <stop offset=".68" stop-color="#10ffa0"/><stop offset=".73" stop-color="#00f820"/><stop offset=".8" stop-color="#50ff10"/><stop offset=".87" stop-color="#88ff10"/>
          <stop offset=".905" stop-color="#70f800"/><stop offset=".922" stop-color="#00e838"/><stop offset=".94" stop-color="#10ffff"/><stop offset=".96" stop-color="#20d0ff"/><stop offset=".98" stop-color="#1860ff"/><stop offset="1" stop-color="#0000f8"/>
        </radialGradient>
        <linearGradient id="wake" gradientUnits="userSpaceOnUse" x1="0" y1="410" x2="0" y2="602">
          <stop offset="0" stop-color="#ff8c14"/><stop offset=".16" stop-color="#ffb014"/><stop offset=".3" stop-color="#fff014"/><stop offset=".38" stop-color="#e8ff14"/><stop offset=".46" stop-color="#50f800"/><stop offset=".56" stop-color="#00f020"/><stop offset=".68" stop-color="#14f890"/><stop offset=".82" stop-color="#14e8ff"/><stop offset="1" stop-color="#1880ff"/>
        </linearGradient>
        <linearGradient id="swath"><stop offset="0" stop-color="#00f050"/><stop offset="1" stop-color="#90f800"/></linearGradient>
        <linearGradient id="scale" x1="0" y1="0" x2="0" y2="1"><stop offset="0" stop-color="#f00"/><stop offset=".25" stop-color="#ff0"/><stop offset=".5" stop-color="#0f0"/><stop offset=".75" stop-color="#0ff"/><stop offset=".83" stop-color="#0094ff"/><stop offset="1" stop-color="#00f"/></linearGradient>
        <linearGradient id="face" x1="0" y1="0" x2="1" y2="1"><stop offset="0" stop-color="#ededf0"/><stop offset="1" stop-color="#e0e0e2"/></linearGradient>
      </defs>

      <path d=${body} fill="url(#duct)"/>
      <g clip-path="url(#bodyClip)">
        <path d="M940 660L900 740L1000 800" fill="none" stroke="#1450ff" stroke-width="70" filter="url(#b12)" opacity=".7"/>
        <path d="M820 708C865 706 890 694 909 680C935 660 949 645 949 622" fill="none" stroke="#0000f0" stroke-width="4"/>
        <circle cx=${CX} cy=${CY} r="257" fill="url(#disc)"/>
        ${soft("M958 680A256 256 0 0 0 1120 866", "#18a0ff", 16, "b6")}
        ${soft("M957 650A250 250 0 0 0 1110 853", "#10ffff", 10, "b3")}
        <path d="M349 708H825M349 881H1206" stroke="#0000f0" stroke-width="3"/>
      </g>
      <g clip-path="url(#discClip)">
        <ellipse cx="1290" cy="470" rx="70" ry="50" fill="#00f848" filter="url(#b12)"/>
        <ellipse cx="1170" cy="412" rx="90" ry="18" fill="#60ff10" filter="url(#b12)"/>
        <ellipse cx="1330" cy="520" rx="26" ry="60" fill="#00f830" filter="url(#b12)"/>
        <ellipse cx="1110" cy="540" rx="66" ry="50" fill="#10ffff" filter="url(#b12)"/>
        <ellipse cx="1176" cy="560" rx="26" ry="36" fill="#1ea8ff" filter="url(#b12)"/>
        <ellipse cx="1166" cy="604" rx="30" ry="26" fill="#1468ff" filter="url(#b12)"/>
        <path d="M1237 533L1290 540Q1350 570 1362 610H1237Z" fill="#18d8ff" filter="url(#b6)"/>
        <path d="M1237 534H1290L1320 610H1237Z" fill="#1e98ff" filter="url(#b6)"/>
        <path d="M1240 488Q1265 500 1270 514L1240 513Z" fill="#14d8ff" filter="url(#b3)"/>
        <path d="M1276 516Q1310 520 1340 550V524L1300 505Z" fill="#14ffc0" filter="url(#b6)"/>
        ${soft("M1240 392Q1300 405 1330 432", "#f8ff00", 18, "b6")}
        ${soft("M1290 408Q1350 430 1388 496Q1402 540 1398 610", "#fff000", 20, "b6")}
        ${soft("M1012 520Q985 570 984 640", "#f0ff00", 12, "b6")}
        ${soft("M1105 432Q1060 440 1020 496L1004 535", "#fff000", 16, "b6")}
        ${soft("M1060 486Q1100 464 1150 466Q1200 474 1262 508", "#20f820", 26, "b6")}
        ${soft("M1024 512Q1050 482 1076 476", "#fff000", 14, "b3")}
        ${soft("M1026 508L1008 535", "#ffa000", 10, "b6")}
        ${soft("M1027 505Q1050 448 1113 440Q1150 436 1204 446", "#f4ff00", 14, "b6")}
        ${soft(blades[0], "#ffff00", 8, "b3")}
        ${soft(blades[1], "#ffff00", 10, "b3")}
        ${soft("M1118 569Q1084 600 1056 690", "#40ff20", 16, "b6")}
        ${soft("M1130 575Q1100 640 1090 700Q1086 760 1100 800", "#10f890", 10, "b6")}
        ${soft("M1066 650Q1054 690 1058 735Q1060 770 1072 790L1105 825", "#fff800", 12, "b6")}
        ${soft("M1030 500Q1044 470 1070 454", "#ff9000", 6, "b3")}
        ${soft("M1314 436L1345 454Q1376 484 1384 520", "#ff9400", 8, "b3")}
        ${soft("M1070 790L1110 826", "#ffa000", 6, "b3")}
      </g>
      <path d="M1237 513Q1270 515 1319 527V543Q1280 534 1237 533Z" fill="url(#swath)"/>
      <path d=${vectors.lines} stroke="#04241c" stroke-width="1" fill="none" opacity=".4"/>
      ${blades.map((b, i) => svg`<path d="${b}" fill="#fff" stroke="${["#ffb414", "#ff8c14", "#ffd014"][i]}"/>`)}
      <path d="M1204 410Q1220 410 1237 413V602H1204Z" fill="url(#wake)"/>
      <path d=${vectors.heads} fill="#001008" opacity=".85"/>
      <g fill="none" stroke="#ff8c14">
        <path d="M1059 482L1084 456M1067 480L1092 453M1073 477L1100 450M1144 460L1153 442M1161 460L1170 444M1165 460L1174 446M1181 462L1191 448"/>
        <path stroke="#ff6a14" d="M1204 410Q1300 420 1340 482Q1370 545 1376 602M1237 415Q1320 440 1345 495L1355 506M1364 508Q1378 550 1384 590M1366 548L1377 602"/>
        <path stroke="#d8d814" d="M1278 516Q1340 540 1408 592V602M1270 534Q1340 555 1373 602M1319 527Q1360 545 1384 590M1319 542Q1360 570 1395 602"/>
        <path d="M1055 692L1078 740M1057 725L1084 775M1062 760L1092 800M1066 700L1080 780"/>
        <path stroke="#30c830" d="M1114 575V597M1129 577V590"/>
      </g>
      <circle cx="1206" cy=${CY} r="236" fill="none" stroke="#1898f0" stroke-width="1.500"/>
      <path d="M971 650A236 236 0 0 0 1115 840" fill="none" stroke="#b8e8ff" stroke-width="1"/>
      <path d="M1124 602A85 85 0 0 1 1288 602" fill="none" stroke="#0010c8" stroke-width="1.500"/>
      <path d="M949 622A256 256 0 0 1 1461 622" fill="none" stroke="#0000f8" stroke-width="2"/>
      ${ductRows.map((y) => svg`<path d="M339 ${y}.500H790" stroke="#000c90" opacity=".4"/>`)}
      <path d="M450 754.500H525M600 754.500H770M455 768.500H505M523 768.500H545M580 768.500H720M635 740.500H780M349 782.500H455M490 782.500H640" stroke="#000428" opacity=".8"/>
      <path d="M430 881h9l-4 23z" fill="#0c48ff"/>
      <circle cx="434" cy="812" r="5" fill="#a01030"/><circle cx="433" cy="811" r="2" fill="#e04040"/>

      <rect x="272" y="170" width="26" height="400" fill="url(#scale)"/>
      <path d="M272.500 170V570.500H303M298.500 500V570M298 512.500H303M298 541.500H303" fill="none" stroke="#000"/>
      <text x="308" y="517">400</text><text x="308" y="546">200</text><text x="308" y="574">0</text>

      <text x="325" y="1096">Frame: 1/20</text>
      <text x="871" class="mid" y="1074">0</text><text class="mid" x="1018" y="1074">17.515</text><text class="mid" x="1092" y="1074">mm</text><text class="mid" x="1168" y="1074">35.03</text><text class="mid" x="1318" y="1074">52.545</text>
      <rect x="868.500" y="1080.500" width="449" height="9" fill="#999" stroke="#000"/><rect x="1018.500" y="1081" width="150" height="8" fill="#fff" stroke="#000" stroke-width=".6"/><path d="M868 1080.500h450M868 1089.500h450" stroke="#000" stroke-width="2"/>

      <ellipse cx="1865" cy="167" rx="37" ry="3" fill="#aaa" filter="url(#b3)"/>
      <rect x="1839.500" y="170.500" width="53" height="53" fill="url(#face)" stroke="#a8a8a8"/><rect x="1850" y="180" width="33" height="34" fill="#d8dae2" opacity=".7"/>
      <text class="cube" transform="rotate(180 1866 197)" x="1866" y="202">HINTEN</text>

      <g fill="none" stroke="#b4b4b8">
        <rect x="1885" y="264" width="33" height="276" rx="4" fill="#f8f8f8" stroke="#d8d8d8" stroke-width="2"/>
        <circle cx="1912" cy="270" r="3.500"/><path d="M1910 268l4 4M1914 268l-4 4"/><circle cx="1912" cy="533" r="3.500"/><path d="M1910 533h4"/>
        <path d="M1892 295q0-10 10-11h10v10q0 12-10 12t-10-11z" fill="#e8e8ec"/><circle cx="1902" cy="295" r="7"/><circle cx="1902" cy="294" r="5" fill="#f8f8f8"/><path d="M1897 299l-3 3M1907 299l3 3"/>
        <path d="M1889 321h26" stroke="#c4c4c8"/>
        <path d="M1895 346q-2-6-5-8 3-2 6 2l-3-9q2-2 4 1l3 6-1-10q2-2 4 1l1 9 2-9q2-1 3 2l-1 10 3-6q3 0 2 3-2 10-9 11-6 1-9-3z"/>
        <path d="M1895 354v11M1890 359.500h11M1890 369h10" stroke-width="3"/><circle cx="1907" cy="368" r="5"/><path d="M1910 372l4 5" stroke-width="2.500"/>
        <ellipse cx="1902" cy="404" rx="4" ry="11"/><ellipse cx="1902" cy="404" rx="11" ry="5"/><path d="M1899 404h6M1902 401v6M1906 396l-2 3 4 1M1907 401l3-2v4"/>
        <path d="M1890 438h22v14h-22z" fill="#ececf0"/><path d="M1895 442h13v6h-13z" fill="#d8d8dc"/><path d="M1891 438l6-7v4h4l5-4v7"/>
        <circle cx="1902" cy="470" r="10"/><circle cx="1902" cy="470" r="8"/><path d="M1898 463h8l-4 5zM1898 477h8l-4-5zM1895 466v8l5-4zM1909 466v8l-5-4z" fill="#b4b4b8"/>
        <path d="M1890 500q0-4 4-4h16q4 0 4 4v4q-12 8-24 0z" fill="#f0f0f4"/><path d="M1893 489q9-5 18 0v10q-9 5-18 0zM1893 489q9 5 18 0" fill="#d8d8dc"/>
      </g>
      <path d="M1899 314h6l-3 3zM1899 384h6l-3 3zM1899 422h6l-3 3zM1899 516h6l-3 3z" fill="#aaa"/>
    </svg>`;
  }
}

/* ---------- points dialog ---------- */
@customElement("points-dialog")
class PointsDialog extends LitElement {
  static styles = [base, css`
    :host { display: block; background: #f0f0f0; font: 11px/14px "DejaVu Sans Condensed", sans-serif; color: #111; box-shadow: 0 2px 8px rgba(0,0,0,.45); }
    .head { height: 30px; background: #fff; display: flex; align-items: center; justify-content: space-between; padding: 0 1px 0 8px; font: 12px/16px "Noto Sans", sans-serif; color: #999; }
    .head button { width: 19px; height: 19px; border: 0; background: #e5e5e5; color: #f4f4f4; align-self: end; margin-bottom: 4px; }
    .in { padding: 3px 3px 2px; display: flex; flex-direction: column; }
    .axis { display: grid; grid-template-columns: 10px 265px 1fr; height: 24px; align-items: start; }
    .axis label { padding-top: 7px; }
    .axis input[type="text"] { height: 20px; margin-left: 4px; }
    input[type="text"] { border: 1px solid #7a7a7a; background: #fff; text-align: right; padding: 0 3px; min-width: 0; }
    input[type="range"] { appearance: none; width: 265px; height: 19px; background: none; }
    input[type="range"]::-webkit-slider-runnable-track { height: 4px; background: #e7eaea; border: 1px solid #d6d6d6; }
    input[type="range"]::-webkit-slider-thumb { appearance: none; width: 10px; height: 19px; background: #0078d7; margin-top: -9px; }
    .name { display: flex; align-items: center; justify-content: space-between; margin-top: -2px; }
    .name input { width: 322px; height: 20px; text-align: left; }
    .note { margin: 1px 0; white-space: nowrap; font: 11px/14px Roboto, sans-serif; }
    .tools { display: flex; gap: 8px; padding-left: 1px; height: 20px; align-items: center; margin-bottom: 3px; }
    .tools button { border: 1px solid #adadad; background: #e1e1e1; height: 20px; width: 21px; display: grid; place-items: center; }
    .tools .plot { width: 75px; height: 17px; margin-left: auto; margin-right: 5px; white-space: nowrap; }
    .tools .help { border: 0; background: none; width: 15px; margin-right: 7px; }
    .box { height: 193px; border: 1px solid #828790; background: #fff; }
    table { border-collapse: collapse; table-layout: fixed; width: 271px; font: 12px/15px Roboto, "Noto Sans", sans-serif; }
    th { background: #bcdcf4; height: 23px; padding: 0; font-weight: 700; color: #000; }
    td { background: #f0f0f0; height: 22px; padding: 0; }
    .c1 { width: 95px; } .c2 { width: 108px; }
    td:first-child { padding-left: 3px; white-space: nowrap; }
    td:last-child { text-align: center; padding-right: 4px; }
    td input { appearance: none; width: 13px; height: 13px; border: 1px solid #333; background: #fff; display: block; margin-left: 1px; }
  `];
  render() {
    const ax: [string, number, number, number][] = [["x", -108, 147, -90], ["y", -56, 199, 2], ["z", -179, 76, 22]];
    return html`<div class="head"><span>Punkte</span><button aria-label="Schließen">✕</button></div>
    <div class="in">
      ${ax.map(([n, lo, hi, v]) => html`<div class="axis"><label for=${n}>${n}</label><input type="range" id=${n} min=${lo} max=${hi} .value=${String(v)}><input type="text" aria-label=${n + " Wert"} .value=${String(v)}></div>`)}
      <div class="name"><label for="nm">Name:</label><input type="text" id="nm"></div>
      <div class="note">Daten werden nur für gespeicherte Iterationen oder Zeitschritte geplottet.</div>
      <div class="tools">
        <button aria-label="Hinzufügen">${icon(12, 12, svg`<path d="M4 1h4v3h3v4H8v3H4V8H1V4h3z" fill="#58c848" stroke="#9adc90"/>`)}</button>
        <button aria-label="Entfernen">${icon(12, 12, svg`<rect x="1" y="4" width="10" height="3" fill="#ff6050" stroke="#ffa8a0"/>`)}</button>
        <button aria-label="Alle entfernen">${icon(17, 16, svg`<g fill="#ffc8c4" stroke="#f03c3c" stroke-width="1.500"><circle cx="5" cy="5" r="4"/><circle cx="12" cy="11" r="4"/><path d="M3 5h4M10 11h4"/></g>`)}</button>
        <button class="plot">Plot anzeigen</button>
        <button class="help" aria-label="Hilfe">${icon(15, 15, svg`<circle cx="7.500" cy="7.500" r="6.500" fill="#2468d8" stroke="#8ab0e8"/><path d="M5.500 6c0-3 4-3 4-.5 0 2-2 1.500-2 3.500M7.500 10.500v1.500" fill="none" stroke="#fff" stroke-width="1.500"/>`)}</button>
      </div>
      <div class="box"><table><thead><tr><th class="c1">Name</th><th class="c2">Zusammenfassung</th><th>Position</th></tr></thead>
        <tbody><tr><td>Measuring Point</td><td><input type="checkbox" aria-label="Zusammenfassung"></td><td>(-90, 2, 22)</td></tr></tbody></table></div>
    </div>`;
  }
}

/* ---------- XY plot ---------- */
const series = [155, 300, 473, 660, 803, 875, 908, 933, 920, 898, 910, 873, 875, 820, 795, 797, 845, 863, 857, 838];
const px = (t: number) => 112 + 427.5 * t;
const py = (v: number) => 35 + (1000 - v) * 0.2722;

@customElement("xy-plot")
class XyPlot extends LitElement {
  static styles = [base, css`
    :host { display: flex; flex-direction: column; background: #f0f0f0; border: 1px solid #6a6a6a; font: 11px/14px "DejaVu Sans Condensed", sans-serif; color: #111; box-shadow: 0 3px 14px rgba(0,0,0,.45); }
    .head { height: 30px; background: #fff; display: flex; align-items: center; gap: 5px; padding: 0 9px 0 8px; font: 12px/16px Roboto, "Noto Sans", sans-serif; }
    .head span { flex: 1; } .head button { border: 0; background: none; }
    .bar { display: flex; gap: 8px; padding: 3px 2px 0 3px; align-items: flex-start; }
    .bar button { height: 18px; border: 1px solid #adadad; background: #e1e1e1; padding: 0; white-space: nowrap; line-height: 14px; }
    .bar .on { background: #cce4f7; border-color: #00539c; width: 90px; }
    .b2 { width: 101px; } .b3 { width: 88px; } .bar .off { width: 105px; background: #ccc; border-color: #bfbfbf; color: #848484; }
    .combo { position: relative; flex: 1; display: flex; }
    .combo select { appearance: none; flex: 1; height: 20px; border: 1px solid #adadad; background: #e3e3e3; padding: 0 3px; font: 11px/14px "DejaVu Sans Condensed", sans-serif; }
    .combo svg { position: absolute; right: 5px; top: 8px; pointer-events: none; }
    .t { font: 700 20px "DejaVu Sans Condensed", sans-serif; text-anchor: middle; }
    .a { font: 700 16px "DejaVu Sans Condensed", sans-serif; text-anchor: middle; }
    .e { font-size: 12px; text-anchor: end; } .m { font-size: 12px; text-anchor: middle; }
  `];
  render() {
    const xs = [0, 0.2, 0.4, 0.6, 0.8, 1];
    const ys = [1000, 900, 800, 700, 600, 500, 400, 300, 200, 100];
    const pts = series.map((v, i) => [px((i + 1) * 0.05), py(v)]);
    return html`${defs}
    <div class="head"><svg width="16" height="16" viewBox="0 -1 34 38" aria-hidden="true"><rect y="-1" width="34" height="38" fill="#fbe4b8"/>${chevronC}</svg><span>XY-Plot: Measuring Point</span>
      <button aria-label="Schließen">${icon(12, 12, svg`<path d="M1 1l10 10M11 1L1 11" stroke="#111"/>`)}</button></div>
    <div class="bar"><button class="on">Punkte anzeigen</button><button class="b2">Daten speichern...</button><button class="b3">Bild speichern...</button><button class="off" disabled>Punkte speichern...</button>
      <div class="combo"><select aria-label="Größe"><option>(1) Geschwindigkeitsbetrag</option></select>${tri("#000")}</div></div>
    <svg width="683" height="356" viewBox="0 -4 683 356" role="img" aria-label="XY-Plot">
      <text class="t" x="327" y="20">(-90, 2, 22)</text>
      <rect x="108" y="28" width="436" height="257" fill="#fff"/>
      <g stroke="#777" stroke-dasharray="1 2">${xs.map((x) => svg`<path d="M${Math.round(px(x)) + 0.5} 28V285"/>`)}${ys.map((y) => svg`<path d="M108 ${Math.round(py(y)) + 0.5}H544"/>`)}</g>
      <path d="M106.500 35V280.500M112 287.500H540" stroke="#000"/>
      ${ys.map((y) => svg`<path d="M98 ${Math.round(py(y)) + 0.5}h9" stroke="#000"/><text class="e" x="93" y="${Math.round(py(y)) + 4}">${y === 1000 ? "1.000" : y}</text>`)}
      ${xs.map((x) => svg`<path d="M${Math.round(px(x)) + 0.5} 287v8" stroke="#000"/><text class="m" x="${Math.round(px(x))}" y="310">${String(x).replace(".", ",")}</text>`)}
      <path d=${"M" + pts.map((p) => p.map((n) => n.toFixed(1)).join(" ")).join("L")} fill="none" stroke="#0055ff" stroke-width="2"/>
      ${pts.map(([x, y]) => svg`<rect x="${Math.round(x) - 3}" y="${Math.round(y) - 3}" width="6" height="6" fill="#0055ff"/>`)}
      <path d="M552 38.500h18" stroke="#0055ff" stroke-width="2"/><rect x="558" y="35" width="7" height="7" fill="#0055ff"/><text x="575" y="42">Szenario 1 (mm/s)</text>
      <text class="a" x="327" y="330">Zeit (s) (Min: 0, Max: 1)</text>
      <g transform="rotate(-90)"><text class="a" x="-157" y="18">Geschwindigkeitsbetrag</text><text class="a" x="-157" y="37">&lt;mm/s&gt; (Min: 0, Max:</text><text class="a" x="-157" y="56">932,947)</text></g>
    </svg>`;
  }
}

@customElement("app-root")
class AppRoot extends LitElement {
  static styles = [base, css`
    :host { display: flex; flex-direction: column; height: 100vh; overflow: hidden; background: #f0f0f0; }
    .work { flex: 1; display: flex; min-height: 0; }
    .stage { flex: 1; display: flex; flex-direction: column; min-width: 0; padding-top: 5px; }
    .view { flex: 1; position: relative; background: #fff; min-height: 0; overflow: hidden; }
    .points { position: absolute; left: 8px; top: 0; width: 365px; }
    .plot { position: absolute; left: 841px; top: 458px; width: 686px; height: 412px; }
    .out { height: 20px; padding: 5px 1px 0; overflow: hidden; }
    .out button { height: 18px; width: 73px; border: 1px solid #adadad; background: #e1e1e1; font: 11px/14px "DejaVu Sans Condensed", sans-serif; white-space: nowrap; }
  `];
  render() {
    return html`<cfd-ribbon></cfd-ribbon>
      <main class="work"><design-tree></design-tree>
        <div class="stage"><div class="view"><flow-view></flow-view><points-dialog class="points"></points-dialog><xy-plot class="plot"></xy-plot></div>
          <div class="out"><button>Ausgabeleiste</button></div></div></main>`;
  }
}
